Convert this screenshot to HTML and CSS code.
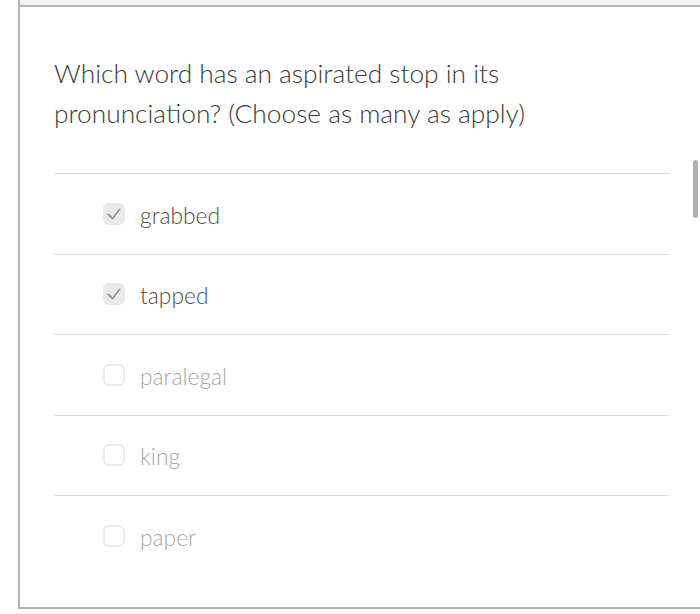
FILE: index.html
```html
<!DOCTYPE html>
<html>
<head>
<meta charset="utf-8">
<link rel="stylesheet" href="styles.css">
</head>
<body>
<div class="panel">
  <div class="band"></div>
  <div class="content">
    <p class="question">Which word has an aspirated stop in its pronunciation? (Choose as many as apply)</p>
    <ul class="options">
      <li class="option checked"><span class="box"><svg viewBox="0 0 22 22" width="22" height="22"><path d="M5.5 11.5 L9.5 15.5 L16.5 6.5" fill="none" stroke="#9c9ca0" stroke-width="2" stroke-linecap="round" stroke-linejoin="round"/></svg></span><span class="label">grabbed</span></li>
      <li class="option checked"><span class="box"><svg viewBox="0 0 22 22" width="22" height="22"><path d="M5.5 11.5 L9.5 15.5 L16.5 6.5" fill="none" stroke="#9c9ca0" stroke-width="2" stroke-linecap="round" stroke-linejoin="round"/></svg></span><span class="label">tapped</span></li>
      <li class="option"><span class="box"></span><span class="label">paralegal</span></li>
      <li class="option"><span class="box"></span><span class="label">king</span></li>
      <li class="option"><span class="box"></span><span class="label">paper</span></li>
    </ul>
  </div>
  <div class="scrollbar"></div>
</div>
</body>
</html>
```
FILE: styles.css
```css
html, body {
  margin: 0;
  padding: 0;
  background: #ffffff;
}
body {
  font-family: Lato, "Open Sans", sans-serif;
  width: 700px;
  height: 614px;
  overflow: hidden;
}
.panel {
  position: relative;
  margin-left: 18px;
  width: 700px;
  height: 607px;
  border-left: 2px solid #b4b4b4;
  border-bottom: 2px solid #b4b4b4;
  background: #ffffff;
}
.band {
  height: 5px;
  background: #f3f3f3;
  border-bottom: 2px solid #b4b4b4;
}
.content {
  padding: 46px 0 0 34px;
  width: 615px;
}
.question {
  margin: 0;
  max-width: 560px;
  font-size: 26.3px;
  font-weight: 300;
  line-height: 40px;
  color: #3a3a3a;
}
.options {
  list-style: none;
  margin: 40px 0 0 0;
  padding: 0;
}
.option {
  display: flex;
  align-items: center;
  gap: 15px;
  height: 79.5px;
  padding-left: 49px;
  border-top: 1px solid #dedede;
}
.box {
  width: 22px;
  height: 22px;
  box-sizing: border-box;
  border-radius: 6px;
  border: 2px solid #ececec;
  display: flex;
  align-items: center;
  justify-content: center;
  flex: none;
}
.checked .box {
  border: none;
  background: #e9e9ec;
}
.label {
  font-size: 22.8px;
  font-weight: 300;
  color: #a6a6a6;
  position: relative;
  top: 1px;
}
.checked .label {
  color: #4c4c4c;
}
.scrollbar {
  position: absolute;
  left: 673px;
  top: 160px;
  width: 5px;
  height: 58px;
  border-radius: 3px;
  background: #b0b0b0;
}
```
